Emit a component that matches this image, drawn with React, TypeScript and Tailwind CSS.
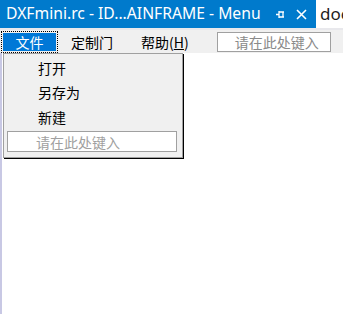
import React from "react";

const cjk = { fontFamily: '"Noto Sans CJK SC", "Noto Sans", sans-serif' };
const lat = { fontFamily: '"Noto Sans", "Noto Sans CJK SC", sans-serif' };

export default function App() {
  return (
    <div className="w-[343px] h-[314px] bg-white relative overflow-hidden" style={cjk}>
      {/* title bar */}
      <div className="flex h-[28px]">
        <div className="flex items-center w-[316px] shrink-0 bg-[#007acc] text-white pl-[6px]">
          <span className="text-[15.7px] leading-none whitespace-nowrap" style={lat}>DXFmini.rc - ID...AINFRAME - Menu</span>
          <svg className="ml-[14px] shrink-0" width="11" height="11" viewBox="0 0 11 11">
            <path d="M1 5.5H4M4 2V9M4 3H9M4 8H9M8 3V8" stroke="white" strokeWidth="1.3" fill="none" />
          </svg>
          <svg className="ml-[10px] shrink-0" width="11" height="11" viewBox="0 0 11 11">
            <path d="M1 1L10 10M10 1L1 10" stroke="white" strokeWidth="1.6" />
          </svg>
        </div>
        <div className="flex-1 bg-white flex items-center pl-[4px] text-[17px] text-[#1e1e1e] whitespace-nowrap overflow-hidden" style={lat}>doc</div>
      </div>
      {/* menu bar */}
      <div className="flex items-center h-[25px] bg-[#f0f0f0] border-t-2 border-[#e8e8ec] relative">
        <div className="ml-[1px] border border-dotted border-black p-[1px] h-[22px] flex">
          <div className="bg-[#0078d7] text-white text-[14px] w-[53px] flex items-center justify-center leading-none">文件</div>
        </div>
        <div className="ml-[13px] text-[14px] text-black leading-none">定制门</div>
        <div className="ml-[28px] text-[14px] text-black leading-none">帮助(<span className="underline">H</span>)</div>
        <div className="ml-[28px] h-[20px] w-[114px] border border-[#a0a0a0] bg-white text-[14px] text-[#8a8a8a] flex items-center pl-[17px] leading-none whitespace-nowrap">请在此处键入</div>
      </div>
      {/* content */}
      <div className="border-l-[2px] border-[#c8c8e4] h-[261px] bg-white"></div>
      {/* dropdown */}
      <div className="absolute left-[3px] top-[53px] w-[180px] h-[105px] bg-[#f0f0f0] border border-[#a0a0a0] shadow-[1px_1px_0_0_#000] flex flex-col">
        <div className="h-[25px] pl-[34px] flex items-center text-[14px] text-black leading-none pt-[3px]">打开</div>
        <div className="h-[25px] pl-[34px] flex items-center text-[14px] text-black leading-none">另存为</div>
        <div className="h-[25px] pl-[34px] flex items-center text-[14px] text-black leading-none">新建</div>
        <div className="ml-[3px] mt-[2px] w-[170px] h-[21px] border border-[#a0a0a0] bg-white text-[14px] text-[#a0a0a0] flex items-center pl-[28px] leading-none">请在此处键入</div>
      </div>
    </div>
  );
}
